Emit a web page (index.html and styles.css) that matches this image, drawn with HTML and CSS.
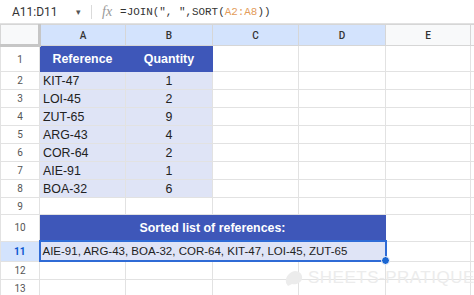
FILE: index.html
```html
<!DOCTYPE html>
<html lang="en">
<head>
  <meta charset="UTF-8">
  <title>JOIN SORT</title>
  <link rel="stylesheet" href="styles.css">
</head>
<body>

<div class="formulabar">
  <span class="namebox">A11:D11</span>
  <span class="arrow">&#9662;</span>
  <span class="sep"></span>
  <span class="fx">fx</span>
  <span class="formula">=JOIN(", ",SORT(<span class="range">A2:A8</span>))</span>
</div>

<table class="sheet">
  <colgroup>
    <col style="width:39px">
    <col style="width:86px">
    <col style="width:87px">
    <col style="width:86px">
    <col style="width:87px">
    <col style="width:85px">
    <col>
  </colgroup>
  <tr class="colhead">
    <td class="corner"></td>
    <td class="sel">A</td>
    <td class="sel">B</td>
    <td class="sel">C</td>
    <td class="sel">D</td>
    <td>E</td>
    <td></td>
  </tr>
  <tr class="r1">
    <td class="rh">1</td>
    <td class="head">Reference</td>
    <td class="head">Quantity</td>
    <td></td><td></td><td></td><td></td>
  </tr>
  <tr><td class="rh">2</td><td class="data">KIT-47</td><td class="data num">1</td><td></td><td></td><td></td><td></td></tr>
  <tr><td class="rh">3</td><td class="data">LOI-45</td><td class="data num">2</td><td></td><td></td><td></td><td></td></tr>
  <tr><td class="rh">4</td><td class="data">ZUT-65</td><td class="data num">9</td><td></td><td></td><td></td><td></td></tr>
  <tr><td class="rh">5</td><td class="data">ARG-43</td><td class="data num">4</td><td></td><td></td><td></td><td></td></tr>
  <tr><td class="rh">6</td><td class="data">COR-64</td><td class="data num">2</td><td></td><td></td><td></td><td></td></tr>
  <tr><td class="rh">7</td><td class="data">AIE-91</td><td class="data num">1</td><td></td><td></td><td></td><td></td></tr>
  <tr><td class="rh">8</td><td class="data">BOA-32</td><td class="data num">6</td><td></td><td></td><td></td><td></td></tr>
  <tr class="r9"><td class="rh">9</td><td></td><td></td><td></td><td></td><td></td><td></td></tr>
  <tr class="r10">
    <td class="rh">10</td>
    <td class="head" colspan="4">Sorted list of references:</td>
    <td></td><td></td>
  </tr>
  <tr class="r11">
    <td class="rh selrow">11</td>
    <td class="data result" colspan="4">AIE-91, ARG-43, BOA-32, COR-64, KIT-47, LOI-45, ZUT-65<span class="handle"></span></td>
    <td></td><td></td>
  </tr>
  <tr><td class="rh">12</td><td></td><td></td><td></td><td></td><td></td><td></td></tr>
  <tr><td class="rh">13</td><td></td><td></td><td></td><td></td><td></td><td></td></tr>
</table>

<div class="watermark">
  <svg width="22" height="18" viewBox="0 0 22 18"><path d="M3 14 C2 8 6 3 12 2 C17 2 20 6 19 10 C18 14 13 16 9 15 L5 17 Z" fill="#ececec"/></svg>
  <span>SHEETS-PRATIQUE</span>
</div>

</body>
</html>
```

FILE: styles.css
```css
body {
  margin: 0;
  font-family: "Liberation Sans", Arial, sans-serif;
  background: #fff;
  width: 474px;
  height: 295px;
  overflow: hidden;
  position: relative;
}
.formulabar {
  height: 23px;
  border-bottom: 1px solid #e1e1e1;
  display: flex;
  align-items: center;
  font-family: Roboto, "Liberation Sans", sans-serif;
  font-size: 12px;
  color: #333;
}
.namebox {
  margin-left: 12px;
  width: 62px;
}
.arrow {
  font-size: 9px;
  color: #555;
  margin-left: 2px;
}
.sep {
  width: 1px;
  height: 14px;
  background: #dadada;
  margin-left: 10px;
}
.fx {
  font-family: "Liberation Serif", serif;
  font-style: italic;
  color: #999;
  font-size: 14px;
  margin-left: 10px;
}
.formula {
  font-family: "Liberation Mono", monospace;
  font-size: 10.9px;
  margin-left: 8px;
  color: #333;
}
.range {
  color: #e39c5a;
}
.sheet {
  border-collapse: collapse;
  table-layout: fixed;
  width: 480px;
}
.sheet td {
  border: 1px solid #e2e2e2;
  height: 17px;
  padding: 0 3px;
  font-size: 12.4px;
  color: #222;
  white-space: nowrap;
  overflow: visible;
}
.colhead td {
  height: 19px;
  background: #f8f9fa;
  text-align: center;
  font-family: Roboto, sans-serif;
  font-size: 10px;
  font-weight: 500;
  color: #333;
  border-color: #d6d6d6;
}
.colhead td.sel {
  background: #d3e3fd;
}
.colhead td.corner {
  border-right: 3px solid #c6c6c6;
  border-bottom: 3px solid #c6c6c6;
}
.sheet td.rh {
  background: #fff;
  text-align: center;
  font-family: Roboto, sans-serif;
  font-size: 10px;
  color: #555;
  padding: 0;
}
.sheet td.selrow {
  background: #d3e3fd;
  color: #0b57d0;
  font-weight: 700;
}
.r1 td {
  height: 24px;
}
.r9 td {
  height: 16px;
}
.r10 td {
  height: 25px;
}
.r11 td {
  height: 18px;
}
.sheet td.head {
  background: #3e57b9;
  color: #fff;
  font-weight: 700;
  text-align: center;
  font-size: 12.4px;
  border-color: #3e57b9;
}
.sheet td.data {
  background: #dfe4f6;
}
.sheet td.num {
  text-align: center;
}
.sheet td.result {
  position: relative;
  border: 2px solid #2f6bd6;
  padding-left: 2px;
  font-size: 11.5px;
}
.handle {
  position: absolute;
  right: -5px;
  bottom: -5px;
  width: 7px;
  height: 7px;
  border-radius: 50%;
  background: #1a66d2;
  border: 1px solid #fff;
}
.watermark {
  position: absolute;
  left: 283px;
  top: 268px;
  display: flex;
  align-items: center;
  gap: 3px;
  white-space: nowrap;
  color: #ececec;
  font-family: "Liberation Sans", sans-serif;
  font-size: 17px;
  letter-spacing: 0.5px;
}
```
